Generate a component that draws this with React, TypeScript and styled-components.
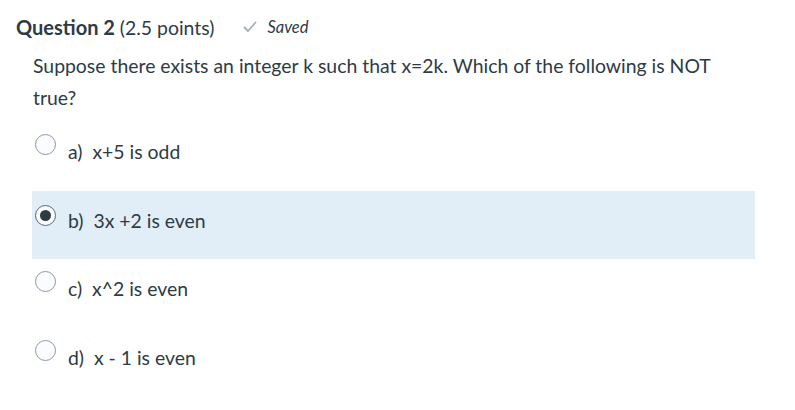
import styled, { createGlobalStyle } from 'styled-components';

const GlobalStyle = createGlobalStyle`
  html, body {
    margin: 0;
    padding: 0;
    background: #ffffff;
  }
  body {
    font-family: Lato, "Open Sans", "Liberation Sans", sans-serif;
    color: #2d3b45;
  }
`;

const Page = styled.div`
  width: 795px;
  height: 410px;
  box-sizing: border-box;
  padding: 12px 40px 0 16px;
`;

const Header = styled.div`
  display: flex;
  align-items: center;
  gap: 29px;
  height: 30px;
`;

const Title = styled.h2`
  margin: 0;
  font-size: 19.4px;
  font-weight: 400;
  color: #2d3b45;
  b {
    font-weight: 700;
    font-size: 20px;
  }
`;

const Status = styled.span`
  display: flex;
  align-items: center;
  gap: 10px;
  font-size: 16.5px;
  font-style: italic;
  color: #2d3b45;
`;

const Body = styled.div`
  padding: 0 0 0 16px;
`;

const Prompt = styled.p`
  margin: 8px 0 0 1px;
  font-size: 19.4px;
  line-height: 32px;
  color: #2d3b45;
`;

const Options = styled.div`
  display: flex;
  flex-direction: column;
  margin-top: 8px;
`;

const Option = styled.label<{ $selected?: boolean }>`
  display: flex;
  align-items: flex-start;
  height: 68.5px;
  padding: 19px 0 0 3px;
  box-sizing: border-box;
  background: ${({ $selected }) => ($selected ? '#e1eef8' : 'transparent')};
  font-size: 19.4px;
  color: #2d3b45;
`;

const Radio = styled.span<{ $checked?: boolean }>`
  width: 19px;
  height: 19px;
  margin-top: ${({ $checked }) => ($checked ? '-5px' : '-7px')};
  border-radius: 50%;
  border: 1px solid ${({ $checked }) => ($checked ? '#5b6770' : '#8d98a0')};
  background: #fbfcff;
  display: flex;
  align-items: center;
  justify-content: center;
  flex-shrink: 0;
  &::after {
    content: '';
    width: 11px;
    height: 11px;
    border-radius: 50%;
    background: #2d3b45;
    display: ${({ $checked }) => ($checked ? 'block' : 'none')};
  }
`;

const OptionText = styled.span`
  margin-left: 12px;
  line-height: 22px;
  white-space: pre;
`;

const choices = [
  { key: 'a', text: 'x+5 is odd' },
  { key: 'b', text: '3x +2 is even' },
  { key: 'c', text: 'x^2 is even' },
  { key: 'd', text: 'x - 1 is even' },
];

export default function App() {
  const selected = 'b';
  return (
    <>
      <GlobalStyle />
      <Page>
        <Header>
          <Title>
            <b>Question 2</b> (2.5 points)
          </Title>
          <Status>
            <svg width="14" height="12" viewBox="0 0 14 12" fill="none">
              <path d="M1.5 6.5 L5 10 L12.5 1.5" stroke="#a5afb5" strokeWidth="1.8" strokeLinecap="round" strokeLinejoin="round" />
            </svg>
            Saved
          </Status>
        </Header>
        <Body>
          <Prompt>
            Suppose there exists an integer k such that x=2k. Which of the following is NOT true?
          </Prompt>
          <Options>
            {choices.map((c) => (
              <Option key={c.key} $selected={c.key === selected}>
                <Radio $checked={c.key === selected} />
                <OptionText>
                  {c.key})  {c.text}
                </OptionText>
              </Option>
            ))}
          </Options>
        </Body>
      </Page>
    </>
  );
}
